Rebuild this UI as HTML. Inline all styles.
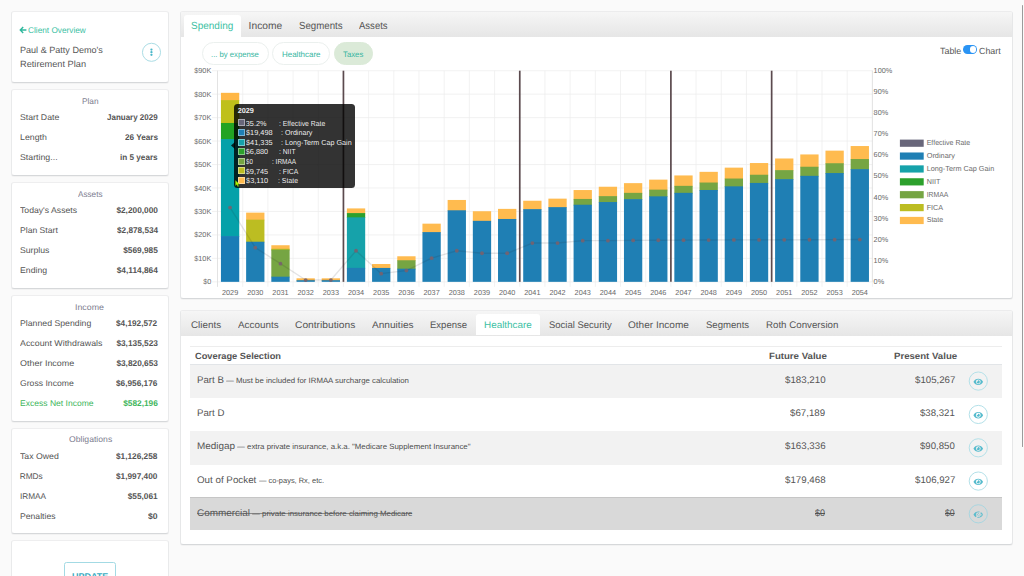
<!DOCTYPE html>
<html lang="en">
<head>
<meta charset="utf-8">
<title>Retirement Plan</title>
<style>
*{box-sizing:border-box;margin:0;padding:0}
html,body{width:1024px;height:576px;overflow:hidden;background:#fafafa;font-family:"Liberation Sans",sans-serif;color:#555;text-rendering:geometricPrecision}
body{position:relative}
#app{position:absolute;left:0;top:0;width:1024px;height:620px;}
.abs{position:absolute;display:block}
.t{position:absolute;display:block;white-space:nowrap;line-height:12px;transform-origin:0 50%;font-weight:normal;color:#555;text-decoration:none}
.t.b{font-weight:bold}
.card{position:absolute;left:11px;width:158px;background:#fff;border:1px solid #e9eaeb;border-top-color:#eeeeef;border-bottom-color:#d6d8da;border-radius:3px;box-shadow:0 1px 1px rgba(0,0,0,.035)}
.panel{position:absolute;left:180px;width:833px;background:#fff;border:1px solid #e6e7e8;border-top-color:#ececed;border-bottom-color:#d6d8da;border-radius:3px;box-shadow:0 1px 1px rgba(0,0,0,.035)}
.tabbar{position:absolute;left:0;right:0;top:0;height:25px;background:linear-gradient(#f6f6f6,#e6e6e6);border-radius:2px 2px 0 0}
.p2 .tabbar{height:24.5px}
.tabon{height:22px;background:#fff;border-radius:3px 3px 0 0}
.pill{height:22.7px;border:1px solid #ebf0ee;border-radius:11.5px;background:#fff}
.pill.sel{background:#dbead8;border-color:#dbead8}
.tog{width:14.5px;height:8.8px;border-radius:4.4px;background:#2a94f4}
.tog i{position:absolute;right:1.1px;top:1.2px;width:6.4px;height:6.4px;border-radius:50%;background:#fff}
.upd{width:51.5px;height:30px;border:1px solid #a3dae4;border-radius:2.5px;background:#fff}
.chart text{font-family:"Liberation Sans",sans-serif;font-size:7.3px;fill:#6a6a6a}
.tt{position:absolute;width:120.7px;height:84.3px;background:rgba(0,0,0,.8);border-radius:3.5px}
.tt .t{line-height:9px;font-size:7.3px;color:rgba(255,255,255,.93);white-space:pre}
.tt b.t{font-weight:bold}
.sw{width:7.1px;height:7.1px;border:1px solid rgba(255,255,255,.42)}
.thead{border-top:1px solid #ededed;border-bottom:1px solid #e3e6e8}
.trow.off{border-top:1px solid #c6c6c6}
.trow.first{border-top:1px solid #e2e5e8}
.sb{left:1021.8px;top:5px;width:1.3px;height:442px;background:#9b9b9b;border-radius:1px}
</style>
</head>
<body>
<div id="app">
<aside>
<section class="card" style="top:11px;height:72px">
<svg class="abs" width="8" height="8" viewBox="0 0 8 8" style="left:7px;top:14px"><path d="M3.7 .5 .3 4 3.7 7.5 4.7 6.5 3 4.8H7.4V3.2H3L4.7 1.5Z" fill="#2fb89d"/></svg>
<a class="t" style="left:16.46px;top:12.4px;font-size:8.32px;transform:scaleX(0.993);color:#3dbfa4">Client Overview</a>
<span class="t l" style="left:7.7px;top:30.5px;font-size:8.96px;transform:scaleX(1.012);line-height:14px;color:#555">Paul &amp; Patty Demo's</span>
<span class="t l" style="left:7.7px;top:44.5px;font-size:8.96px;transform:scaleX(1.029);line-height:14px;color:#555">Retirement Plan</span>
<svg class="abs dots" width="23" height="23" viewBox="0 0 23 23" style="left:128px;top:29px"><g transform="translate(0.5 0.3)"><circle cx="11" cy="11" r="9.05" fill="none" stroke="#abdde5" stroke-width="1"/><g fill="#4ab7c9"><circle cx="10.95" cy="8.25" r="1.15"/><circle cx="10.95" cy="10.9" r="1.15"/><circle cx="10.95" cy="13.55" r="1.15"/></g></g></svg>
</section>
<section class="card" style="top:89px;height:87px">
<h3 class="t h" style="left:69.95px;top:5.2px;font-size:8.32px;color:#7e7e90">Plan</h3>
<span class="t l" style="left:7.7px;top:21.22px;font-size:8.32px;transform:scaleX(1.049)">Start Date</span>
<span class="t b v" style="left:95.2px;top:21.22px;font-size:8.32px;transform:scaleX(0.960);color:#545454">January 2029</span>
<span class="t l" style="left:7.7px;top:41.22px;font-size:8.32px;transform:scaleX(1.055)">Length</span>
<span class="t b v" style="left:112.7px;top:41.22px;font-size:8.32px;transform:scaleX(0.984);color:#545454">26 Years</span>
<span class="t l" style="left:7.7px;top:61.22px;font-size:8.32px;transform:scaleX(1.056)">Starting...</span>
<span class="t b v" style="left:108.45px;top:61.22px;font-size:8.32px;transform:scaleX(0.981);color:#545454">in 5 years</span>
</section>
<section class="card" style="top:182px;height:107px">
<h3 class="t h" style="left:65.7px;top:4.95px;font-size:8.32px;transform:scaleX(0.981);color:#7e7e90">Assets</h3>
<span class="t l" style="left:7.7px;top:20.97px;font-size:8.32px;transform:scaleX(1.042)">Today's Assets</span>
<span class="t b v" style="left:104.38px;top:20.97px;font-size:8.32px;color:#545454">$2,200,000</span>
<span class="t l" style="left:7.7px;top:41.22px;font-size:8.32px;transform:scaleX(1.035)">Plan Start</span>
<span class="t b v" style="left:104.65px;top:41.22px;font-size:8.32px;transform:scaleX(0.988);color:#545454">$2,878,534</span>
<span class="t l" style="left:7.7px;top:61.22px;font-size:8.32px;transform:scaleX(1.045)">Surplus</span>
<span class="t b v" style="left:111.2px;top:61.22px;font-size:8.32px;color:#545454">$569,985</span>
<span class="t l" style="left:7.7px;top:80.97px;font-size:8.32px;transform:scaleX(1.046)">Ending</span>
<span class="t b v" style="left:104.72px;top:80.97px;font-size:8.32px;color:#545454">$4,114,864</span>
</section>
<section class="card" style="top:295px;height:127px">
<h3 class="t h" style="left:63.3px;top:4.7px;font-size:8.32px;transform:scaleX(1.060);color:#7e7e90">Income</h3>
<span class="t l" style="left:7.7px;top:20.82px;font-size:8.32px;transform:scaleX(1.049)">Planned Spending</span>
<span class="t b v" style="left:104.33px;top:20.82px;font-size:8.32px;transform:scaleX(0.990);color:#545454">$4,192,572</span>
<span class="t l" style="left:7.7px;top:40.92px;font-size:8.32px;transform:scaleX(1.062)">Account Withdrawals</span>
<span class="t b v" style="left:104.38px;top:40.92px;font-size:8.32px;color:#545454">$3,135,523</span>
<span class="t l" style="left:7.7px;top:60.97px;font-size:8.32px;transform:scaleX(1.078)">Other Income</span>
<span class="t b v" style="left:104.38px;top:60.97px;font-size:8.32px;color:#545454">$3,820,653</span>
<span class="t l" style="left:7.7px;top:80.97px;font-size:8.32px;transform:scaleX(1.039)">Gross Income</span>
<span class="t b v" style="left:104.35px;top:80.97px;font-size:8.32px;transform:scaleX(0.995);color:#545454">$6,956,176</span>
<span class="t l" style="left:7.7px;top:100.97px;font-size:8.32px;transform:scaleX(1.027);color:#41b65c">Excess Net Income</span>
<span class="t b v" style="left:111.2px;top:100.97px;font-size:8.32px;color:#41b65c">$582,196</span>
</section>
<section class="card" style="top:428px;height:106px">
<h3 class="t h" style="left:56.54px;top:4.45px;font-size:8.32px;transform:scaleX(1.039);color:#7e7e90">Obligations</h3>
<span class="t l" style="left:7.7px;top:20.97px;font-size:8.32px;transform:scaleX(1.050)">Tax Owed</span>
<span class="t b v" style="left:104.36px;top:20.97px;font-size:8.32px;transform:scaleX(0.995);color:#545454">$1,126,258</span>
<span class="t l" style="left:7.7px;top:40.97px;font-size:8.32px">RMDs</span>
<span class="t b v" style="left:104.35px;top:40.97px;font-size:8.32px;transform:scaleX(0.995);color:#545454">$1,997,400</span>
<span class="t l" style="left:7.7px;top:60.97px;font-size:8.32px;transform:scaleX(0.991)">IRMAA</span>
<span class="t b v" style="left:115.7px;top:60.97px;font-size:8.32px;color:#545454">$55,061</span>
<span class="t l" style="left:7.7px;top:80.82px;font-size:8.32px;transform:scaleX(1.038)">Penalties</span>
<span class="t b v" style="left:136.2px;top:80.82px;font-size:8.32px;transform:scaleX(1.037);color:#545454">$0</span>
</section>
<section class="card" style="top:540px;height:60px">
<button class="abs upd" style="left:52.4px;top:21.2px"></button>
<span class="t b nocal" style="left:60.2px;top:28.72px;font-size:8.32px;transform:scaleX(1.082);color:#38abc1">UPDATE</span>
</section>
</aside>
<main>
<section class="panel" style="top:11px;height:288px">
<div class="tabbar"></div>
<div class="abs tabon" style="left:2.75px;top:2.6px;width:57.1px;height:22.4px"></div>
<a class="t" style="left:10.45px;top:9.45px;font-size:10.24px;transform:scaleX(0.977);color:#3dbfa4">Spending</a>
<a class="t" style="left:67.6px;top:9.45px;font-size:10.24px">Income</a>
<a class="t" style="left:117.95px;top:9.45px;font-size:10.24px;transform:scaleX(0.946)">Segments</a>
<a class="t" style="left:178.2px;top:9.45px;font-size:10.24px;transform:scaleX(0.931)">Assets</a>
<div class="abs pill" style="left:21px;top:30px;width:67px"></div>
<span class="t" style="left:30.34px;top:37.26px;font-size:7.9px;transform:scaleX(0.975);color:#36b6a1">... by expense</span>
<div class="abs pill" style="left:91.25px;top:30px;width:57.75px"></div>
<span class="t" style="left:101.2px;top:37.26px;font-size:7.9px;transform:scaleX(1.010);color:#36b6a1">Healthcare</span>
<div class="abs pill sel" style="left:153px;top:30px;width:39.25px"></div>
<span class="t" style="left:162.45px;top:37.26px;font-size:7.9px;transform:scaleX(0.986);color:#36b6a1">Taxes</span>
<span class="t" style="left:758.95px;top:32.6px;font-size:8.96px;transform:scaleX(0.992)">Table</span>
<div class="abs tog" style="left:781.75px;top:33.2px"><i></i></div>
<span class="t" style="left:797.9px;top:32.6px;font-size:8.96px;transform:scaleX(0.988)">Chart</span>
<svg class="abs chart" width="831" height="286" viewBox="181 12 831 286" style="left:0;top:0">
<line x1="212" y1="70.7" x2="872.4" y2="70.7" stroke="#ededed" stroke-width="0.7"/>
<line x1="212" y1="94.16" x2="872.4" y2="94.16" stroke="#ededed" stroke-width="0.7"/>
<line x1="212" y1="117.62" x2="872.4" y2="117.62" stroke="#ededed" stroke-width="0.7"/>
<line x1="212" y1="141.08" x2="872.4" y2="141.08" stroke="#ededed" stroke-width="0.7"/>
<line x1="212" y1="164.54" x2="872.4" y2="164.54" stroke="#ededed" stroke-width="0.7"/>
<line x1="212" y1="188" x2="872.4" y2="188" stroke="#ededed" stroke-width="0.7"/>
<line x1="212" y1="211.46" x2="872.4" y2="211.46" stroke="#ededed" stroke-width="0.7"/>
<line x1="212" y1="234.92" x2="872.4" y2="234.92" stroke="#ededed" stroke-width="0.7"/>
<line x1="212" y1="258.38" x2="872.4" y2="258.38" stroke="#ededed" stroke-width="0.7"/>
<line x1="212" y1="281.84" x2="872.4" y2="281.84" stroke="#ededed" stroke-width="0.7"/>
<line x1="217.5" y1="70.7" x2="217.5" y2="286.84" stroke="#ededed" stroke-width="0.7"/>
<line x1="242.69" y1="70.7" x2="242.69" y2="286.84" stroke="#ededed" stroke-width="0.7"/>
<line x1="267.88" y1="70.7" x2="267.88" y2="286.84" stroke="#ededed" stroke-width="0.7"/>
<line x1="293.07" y1="70.7" x2="293.07" y2="286.84" stroke="#ededed" stroke-width="0.7"/>
<line x1="318.25" y1="70.7" x2="318.25" y2="286.84" stroke="#ededed" stroke-width="0.7"/>
<line x1="343.44" y1="70.7" x2="343.44" y2="286.84" stroke="#ededed" stroke-width="0.7"/>
<line x1="368.63" y1="70.7" x2="368.63" y2="286.84" stroke="#ededed" stroke-width="0.7"/>
<line x1="393.82" y1="70.7" x2="393.82" y2="286.84" stroke="#ededed" stroke-width="0.7"/>
<line x1="419.01" y1="70.7" x2="419.01" y2="286.84" stroke="#ededed" stroke-width="0.7"/>
<line x1="444.2" y1="70.7" x2="444.2" y2="286.84" stroke="#ededed" stroke-width="0.7"/>
<line x1="469.38" y1="70.7" x2="469.38" y2="286.84" stroke="#ededed" stroke-width="0.7"/>
<line x1="494.57" y1="70.7" x2="494.57" y2="286.84" stroke="#ededed" stroke-width="0.7"/>
<line x1="519.76" y1="70.7" x2="519.76" y2="286.84" stroke="#ededed" stroke-width="0.7"/>
<line x1="544.95" y1="70.7" x2="544.95" y2="286.84" stroke="#ededed" stroke-width="0.7"/>
<line x1="570.14" y1="70.7" x2="570.14" y2="286.84" stroke="#ededed" stroke-width="0.7"/>
<line x1="595.33" y1="70.7" x2="595.33" y2="286.84" stroke="#ededed" stroke-width="0.7"/>
<line x1="620.52" y1="70.7" x2="620.52" y2="286.84" stroke="#ededed" stroke-width="0.7"/>
<line x1="645.7" y1="70.7" x2="645.7" y2="286.84" stroke="#ededed" stroke-width="0.7"/>
<line x1="670.89" y1="70.7" x2="670.89" y2="286.84" stroke="#ededed" stroke-width="0.7"/>
<line x1="696.08" y1="70.7" x2="696.08" y2="286.84" stroke="#ededed" stroke-width="0.7"/>
<line x1="721.27" y1="70.7" x2="721.27" y2="286.84" stroke="#ededed" stroke-width="0.7"/>
<line x1="746.46" y1="70.7" x2="746.46" y2="286.84" stroke="#ededed" stroke-width="0.7"/>
<line x1="771.65" y1="70.7" x2="771.65" y2="286.84" stroke="#ededed" stroke-width="0.7"/>
<line x1="796.83" y1="70.7" x2="796.83" y2="286.84" stroke="#ededed" stroke-width="0.7"/>
<line x1="822.02" y1="70.7" x2="822.02" y2="286.84" stroke="#ededed" stroke-width="0.7"/>
<line x1="847.21" y1="70.7" x2="847.21" y2="286.84" stroke="#ededed" stroke-width="0.7"/>
<line x1="872.4" y1="70.7" x2="872.4" y2="286.84" stroke="#ededed" stroke-width="0.7"/>
<line x1="217.5" y1="70.7" x2="217.5" y2="286.84" stroke="#dcdcdc" stroke-width="0.7"/>
<line x1="872.4" y1="70.7" x2="872.4" y2="281.84" stroke="#dcdcdc" stroke-width="0.7"/>
<rect x="220.94" y="92.83" width="18.3" height="8" fill="#ffb746"/>
<rect x="220.94" y="100.12" width="18.3" height="23.56" fill="#bfc01a"/>
<rect x="220.94" y="122.99" width="18.3" height="16.84" fill="#22a322"/>
<rect x="220.94" y="139.13" width="18.3" height="97.67" fill="#05a1a9"/>
<rect x="220.94" y="236.1" width="18.3" height="45.74" fill="#1a7cb6"/>
<rect x="246.13" y="212.63" width="18.3" height="7.74" fill="#ffbb4f"/>
<rect x="246.13" y="219.67" width="18.3" height="22.75" fill="#bcbd22"/>
<rect x="246.13" y="241.72" width="18.3" height="40.12" fill="#1f7fb4"/>
<rect x="271.32" y="245.24" width="18.3" height="4.22" fill="#ffbb4f"/>
<rect x="271.32" y="248.76" width="18.3" height="1.64" fill="#bcbd22"/>
<rect x="271.32" y="249.7" width="18.3" height="27.68" fill="#76a543"/>
<rect x="271.32" y="276.68" width="18.3" height="5.16" fill="#1f7fb4"/>
<rect x="296.51" y="278.32" width="18.3" height="2.58" fill="#ffbb4f"/>
<rect x="296.51" y="280.2" width="18.3" height="1.64" fill="#1f7fb4"/>
<rect x="321.7" y="278.32" width="18.3" height="2.58" fill="#ffbb4f"/>
<rect x="321.7" y="280.2" width="18.3" height="1.64" fill="#1f7fb4"/>
<rect x="346.89" y="208.41" width="18.3" height="5.39" fill="#ffbb4f"/>
<rect x="346.89" y="213.1" width="18.3" height="4.92" fill="#2ca02c"/>
<rect x="346.89" y="217.33" width="18.3" height="51.23" fill="#16a2aa"/>
<rect x="346.89" y="267.86" width="18.3" height="13.98" fill="#1f7fb4"/>
<rect x="372.08" y="264.01" width="18.3" height="4.62" fill="#ffbb4f"/>
<rect x="372.08" y="267.93" width="18.3" height="13.91" fill="#1f7fb4"/>
<rect x="397.26" y="256.27" width="18.3" height="4.69" fill="#ffbb4f"/>
<rect x="397.26" y="260.26" width="18.3" height="9.15" fill="#76a543"/>
<rect x="397.26" y="268.7" width="18.3" height="13.14" fill="#1f7fb4"/>
<rect x="422.45" y="223.66" width="18.3" height="9.15" fill="#ffbb4f"/>
<rect x="422.45" y="232.1" width="18.3" height="49.74" fill="#1f7fb4"/>
<rect x="447.64" y="199.96" width="18.3" height="11.02" fill="#ffbb4f"/>
<rect x="447.64" y="210.29" width="18.3" height="71.55" fill="#1f7fb4"/>
<rect x="472.83" y="211.23" width="18.3" height="10.32" fill="#ffbb4f"/>
<rect x="472.83" y="220.84" width="18.3" height="61" fill="#1f7fb4"/>
<rect x="498.02" y="208.88" width="18.3" height="10.79" fill="#ffbb4f"/>
<rect x="498.02" y="218.97" width="18.3" height="62.87" fill="#1f7fb4"/>
<rect x="523.21" y="200.74" width="18.3" height="9.1" fill="#ffbb4f"/>
<rect x="523.21" y="209.14" width="18.3" height="72.7" fill="#1f7fb4"/>
<rect x="548.39" y="198.64" width="18.3" height="9.2" fill="#ffbb4f"/>
<rect x="548.39" y="207.14" width="18.3" height="74.7" fill="#1f7fb4"/>
<rect x="573.58" y="190.04" width="18.3" height="9.6" fill="#ffbb4f"/>
<rect x="573.58" y="198.94" width="18.3" height="6.5" fill="#76a543"/>
<rect x="573.58" y="204.74" width="18.3" height="77.1" fill="#1f7fb4"/>
<rect x="598.77" y="186.74" width="18.3" height="10.1" fill="#ffbb4f"/>
<rect x="598.77" y="196.14" width="18.3" height="6.6" fill="#76a543"/>
<rect x="598.77" y="202.04" width="18.3" height="79.8" fill="#1f7fb4"/>
<rect x="623.96" y="183.14" width="18.3" height="10.4" fill="#ffbb4f"/>
<rect x="623.96" y="192.84" width="18.3" height="7" fill="#76a543"/>
<rect x="623.96" y="199.14" width="18.3" height="82.7" fill="#1f7fb4"/>
<rect x="649.15" y="179.64" width="18.3" height="10.7" fill="#ffbb4f"/>
<rect x="649.15" y="189.64" width="18.3" height="7.4" fill="#76a543"/>
<rect x="649.15" y="196.34" width="18.3" height="85.5" fill="#1f7fb4"/>
<rect x="674.34" y="175.44" width="18.3" height="11.1" fill="#ffbb4f"/>
<rect x="674.34" y="185.84" width="18.3" height="7.7" fill="#76a543"/>
<rect x="674.34" y="192.84" width="18.3" height="89" fill="#1f7fb4"/>
<rect x="699.52" y="171.84" width="18.3" height="11.4" fill="#ffbb4f"/>
<rect x="699.52" y="182.54" width="18.3" height="8.15" fill="#76a543"/>
<rect x="699.52" y="189.99" width="18.3" height="91.85" fill="#1f7fb4"/>
<rect x="724.71" y="167.64" width="18.3" height="11.6" fill="#ffbb4f"/>
<rect x="724.71" y="178.54" width="18.3" height="8.5" fill="#76a543"/>
<rect x="724.71" y="186.34" width="18.3" height="95.5" fill="#1f7fb4"/>
<rect x="749.9" y="163.04" width="18.3" height="12.4" fill="#ffbb4f"/>
<rect x="749.9" y="174.74" width="18.3" height="8.9" fill="#76a543"/>
<rect x="749.9" y="182.94" width="18.3" height="98.9" fill="#1f7fb4"/>
<rect x="775.09" y="158.49" width="18.3" height="12.35" fill="#ffbb4f"/>
<rect x="775.09" y="170.14" width="18.3" height="9.7" fill="#76a543"/>
<rect x="775.09" y="179.14" width="18.3" height="102.7" fill="#1f7fb4"/>
<rect x="800.28" y="154.44" width="18.3" height="13" fill="#ffbb4f"/>
<rect x="800.28" y="166.74" width="18.3" height="9.8" fill="#76a543"/>
<rect x="800.28" y="175.84" width="18.3" height="106" fill="#1f7fb4"/>
<rect x="825.47" y="150.64" width="18.3" height="13.3" fill="#ffbb4f"/>
<rect x="825.47" y="163.24" width="18.3" height="10.5" fill="#76a543"/>
<rect x="825.47" y="173.04" width="18.3" height="108.8" fill="#1f7fb4"/>
<rect x="850.66" y="146.04" width="18.3" height="13.7" fill="#ffbb4f"/>
<rect x="850.66" y="159.04" width="18.3" height="10.8" fill="#76a543"/>
<rect x="850.66" y="169.14" width="18.3" height="112.7" fill="#1f7fb4"/>
<line x1="343.44" y1="70.7" x2="343.44" y2="281.84" stroke="#5b4a4e" stroke-width="1.7"/>
<line x1="519.76" y1="70.7" x2="519.76" y2="281.84" stroke="#5b4a4e" stroke-width="1.7"/>
<line x1="670.89" y1="70.7" x2="670.89" y2="281.84" stroke="#5b4a4e" stroke-width="1.7"/>
<line x1="771.65" y1="70.7" x2="771.65" y2="281.84" stroke="#5b4a4e" stroke-width="1.7"/>
<polyline points="230.09,207.54 255.28,247.64 280.47,263.64 305.66,280.04 330.85,280.04 356.04,250.74 381.23,273.64 406.41,270.54 431.6,258.14 456.79,250.74 481.98,253.24 507.17,253.24 532.36,243.04 557.54,243.04 582.73,240.64 607.92,240.64 633.11,240.44 658.3,240.24 683.49,240.14 708.67,240.04 733.86,239.94 759.05,239.94 784.24,239.84 809.43,239.74 834.62,239.64 859.81,239.54" fill="none" stroke="rgba(30,30,40,0.12)" stroke-width="1.35" stroke-linejoin="round"/>
<circle cx="230.09" cy="207.54" r="1.9" fill="rgba(120,98,110,0.9)"/>
<circle cx="255.28" cy="247.64" r="1.9" fill="rgba(120,98,110,0.9)"/>
<circle cx="280.47" cy="263.64" r="1.9" fill="rgba(120,98,110,0.9)"/>
<circle cx="305.66" cy="280.04" r="1.9" fill="rgba(120,98,110,0.9)"/>
<circle cx="330.85" cy="280.04" r="1.9" fill="rgba(120,98,110,0.9)"/>
<circle cx="356.04" cy="250.74" r="1.9" fill="rgba(120,98,110,0.9)"/>
<circle cx="381.23" cy="273.64" r="1.9" fill="rgba(120,98,110,0.9)"/>
<circle cx="406.41" cy="270.54" r="1.9" fill="rgba(120,98,110,0.9)"/>
<circle cx="431.6" cy="258.14" r="1.9" fill="rgba(120,98,110,0.9)"/>
<circle cx="456.79" cy="250.74" r="1.9" fill="rgba(120,98,110,0.9)"/>
<circle cx="481.98" cy="253.24" r="1.9" fill="rgba(120,98,110,0.9)"/>
<circle cx="507.17" cy="253.24" r="1.9" fill="rgba(120,98,110,0.9)"/>
<circle cx="532.36" cy="243.04" r="1.9" fill="rgba(120,98,110,0.9)"/>
<circle cx="557.54" cy="243.04" r="1.9" fill="rgba(120,98,110,0.9)"/>
<circle cx="582.73" cy="240.64" r="1.9" fill="rgba(120,98,110,0.9)"/>
<circle cx="607.92" cy="240.64" r="1.9" fill="rgba(120,98,110,0.9)"/>
<circle cx="633.11" cy="240.44" r="1.9" fill="rgba(120,98,110,0.9)"/>
<circle cx="658.3" cy="240.24" r="1.9" fill="rgba(120,98,110,0.9)"/>
<circle cx="683.49" cy="240.14" r="1.9" fill="rgba(120,98,110,0.9)"/>
<circle cx="708.67" cy="240.04" r="1.9" fill="rgba(120,98,110,0.9)"/>
<circle cx="733.86" cy="239.94" r="1.9" fill="rgba(120,98,110,0.9)"/>
<circle cx="759.05" cy="239.94" r="1.9" fill="rgba(120,98,110,0.9)"/>
<circle cx="784.24" cy="239.84" r="1.9" fill="rgba(120,98,110,0.9)"/>
<circle cx="809.43" cy="239.74" r="1.9" fill="rgba(120,98,110,0.9)"/>
<circle cx="834.62" cy="239.64" r="1.9" fill="rgba(120,98,110,0.9)"/>
<circle cx="859.81" cy="239.54" r="1.9" fill="rgba(120,98,110,0.9)"/>
<text x="211.3" y="73.25" text-anchor="end">$90K</text>
<text x="211.3" y="96.71" text-anchor="end">$80K</text>
<text x="211.3" y="120.17" text-anchor="end">$70K</text>
<text x="211.3" y="143.63" text-anchor="end">$60K</text>
<text x="211.3" y="167.09" text-anchor="end">$50K</text>
<text x="211.3" y="190.55" text-anchor="end">$40K</text>
<text x="211.3" y="214.01" text-anchor="end">$30K</text>
<text x="211.3" y="237.47" text-anchor="end">$20K</text>
<text x="211.3" y="260.93" text-anchor="end">$10K</text>
<text x="211.3" y="284.39" text-anchor="end">$0</text>
<text x="873.6" y="72.75">100%</text>
<text x="873.6" y="93.88">90%</text>
<text x="873.6" y="115.01">80%</text>
<text x="873.6" y="136.14">70%</text>
<text x="873.6" y="157.27">60%</text>
<text x="873.6" y="178.4">50%</text>
<text x="873.6" y="199.53">40%</text>
<text x="873.6" y="220.66">30%</text>
<text x="873.6" y="241.79">20%</text>
<text x="873.6" y="262.92">10%</text>
<text x="873.6" y="284.05">0%</text>
<text x="230.09" y="294.8" text-anchor="middle">2029</text>
<text x="255.28" y="294.8" text-anchor="middle">2030</text>
<text x="280.47" y="294.8" text-anchor="middle">2031</text>
<text x="305.66" y="294.8" text-anchor="middle">2032</text>
<text x="330.85" y="294.8" text-anchor="middle">2033</text>
<text x="356.04" y="294.8" text-anchor="middle">2034</text>
<text x="381.23" y="294.8" text-anchor="middle">2035</text>
<text x="406.41" y="294.8" text-anchor="middle">2036</text>
<text x="431.6" y="294.8" text-anchor="middle">2037</text>
<text x="456.79" y="294.8" text-anchor="middle">2038</text>
<text x="481.98" y="294.8" text-anchor="middle">2039</text>
<text x="507.17" y="294.8" text-anchor="middle">2040</text>
<text x="532.36" y="294.8" text-anchor="middle">2041</text>
<text x="557.54" y="294.8" text-anchor="middle">2042</text>
<text x="582.73" y="294.8" text-anchor="middle">2043</text>
<text x="607.92" y="294.8" text-anchor="middle">2044</text>
<text x="633.11" y="294.8" text-anchor="middle">2045</text>
<text x="658.3" y="294.8" text-anchor="middle">2046</text>
<text x="683.49" y="294.8" text-anchor="middle">2047</text>
<text x="708.67" y="294.8" text-anchor="middle">2048</text>
<text x="733.86" y="294.8" text-anchor="middle">2049</text>
<text x="759.05" y="294.8" text-anchor="middle">2050</text>
<text x="784.24" y="294.8" text-anchor="middle">2051</text>
<text x="809.43" y="294.8" text-anchor="middle">2052</text>
<text x="834.62" y="294.8" text-anchor="middle">2053</text>
<text x="859.81" y="294.8" text-anchor="middle">2054</text>
<rect x="899.9" y="139.6" width="23.8" height="7.2" fill="#68667a"/>
<text x="926.7" y="145.2" textLength="43.5" lengthAdjust="spacingAndGlyphs">Effective Rate</text>
<rect x="899.9" y="152.48" width="23.8" height="7.2" fill="#1f7fb4"/>
<text x="926.7" y="158.08" textLength="28.2" lengthAdjust="spacingAndGlyphs">Ordinary</text>
<rect x="899.9" y="165.36" width="23.8" height="7.2" fill="#16a2aa"/>
<text x="926.7" y="170.96" textLength="67.5" lengthAdjust="spacingAndGlyphs">Long-Term Cap Gain</text>
<rect x="899.9" y="178.24" width="23.8" height="7.2" fill="#2ca02c"/>
<text x="926.7" y="183.84" textLength="13.6" lengthAdjust="spacingAndGlyphs">NIIT</text>
<rect x="899.9" y="191.12" width="23.8" height="7.2" fill="#76a543"/>
<text x="926.7" y="196.72" textLength="21.5" lengthAdjust="spacingAndGlyphs">IRMAA</text>
<rect x="899.9" y="204" width="23.8" height="7.2" fill="#bcbd22"/>
<text x="926.7" y="209.6" textLength="16.4" lengthAdjust="spacingAndGlyphs">FICA</text>
<rect x="899.9" y="216.88" width="23.8" height="7.2" fill="#ffbb4f"/>
<text x="926.7" y="222.48" textLength="16.5" lengthAdjust="spacingAndGlyphs">State</text>
</svg>
</section>
<div class="tt" style="left:234.4px;top:103.7px">
<svg class="abs" width="4" height="7" viewBox="0 0 4 7" style="left:-3.6px;top:38.6px"><path d="M4 0 0 3.5 4 7Z" fill="rgba(0,0,0,.8)"/></svg>
<b class="t" style="left:3.3px;top:2.4px">2029</b>
<i class="abs sw" style="left:3.5px;top:15.65px;background:#68667a"></i>
<span class="t tv" style="left:11.4px;top:14.82px;font-size:7.3px;line-height:9px">35.2%</span>
<span class="t tl" style="left:44.4px;top:14.82px;font-size:7.3px;transform:scaleX(0.936);line-height:9px">: Effective Rate</span>
<i class="abs sw" style="left:3.5px;top:25.25px;background:#1f7fb4"></i>
<span class="t tv" style="left:11.4px;top:24.42px;font-size:7.3px;transform:scaleX(1.008);line-height:9px">$19,498</span>
<span class="t tl" style="left:46.65px;top:24.42px;font-size:7.3px;transform:scaleX(0.978);line-height:9px">: Ordinary</span>
<i class="abs sw" style="left:3.5px;top:34.85px;background:#16a2aa"></i>
<span class="t tv" style="left:11.4px;top:34.02px;font-size:7.3px;transform:scaleX(1.008);line-height:9px">$41,335</span>
<span class="t tl" style="left:46.65px;top:34.02px;font-size:7.3px;transform:scaleX(0.985);line-height:9px">: Long-Term Cap Gain</span>
<i class="abs sw" style="left:3.5px;top:44.45px;background:#2ca02c"></i>
<span class="t tv" style="left:11.4px;top:43.62px;font-size:7.3px;line-height:9px">$6,880</span>
<span class="t tl" style="left:44.4px;top:43.62px;font-size:7.3px;transform:scaleX(0.925);line-height:9px">: NIIT</span>
<i class="abs sw" style="left:3.5px;top:54.05px;background:#76a543"></i>
<span class="t tv" style="left:11.4px;top:53.22px;font-size:7.3px;transform:scaleX(0.837);line-height:9px">$0</span>
<span class="t tl" style="left:37.3px;top:53.22px;font-size:7.3px;transform:scaleX(0.888);line-height:9px">: IRMAA</span>
<i class="abs sw" style="left:3.5px;top:63.65px;background:#bcbd22"></i>
<span class="t tv" style="left:11.4px;top:62.82px;font-size:7.3px;line-height:9px">$9,745</span>
<span class="t tl" style="left:44.15px;top:62.82px;font-size:7.3px;transform:scaleX(0.934);line-height:9px">: FICA</span>
<i class="abs sw" style="left:3.5px;top:73.25px;background:#ffbb4f"></i>
<span class="t tv" style="left:11.4px;top:72.42px;font-size:7.3px;transform:scaleX(1.021);line-height:9px">$3,110</span>
<span class="t tl" style="left:43.7px;top:72.42px;font-size:7.3px;transform:scaleX(0.948);line-height:9px">: State</span>
</div>
<svg class="abs" width="6" height="8" viewBox="0 0 6 8" style="left:235.4px;top:179.9px"><path d="M.5 .4V5.6L1.8 4.5 2.8 6.6 3.7 6.2 2.8 4.2H4.5Z" fill="#aef500" stroke="#7fb800" stroke-width=".3"/></svg>
<section class="panel p2" style="top:310px;height:235px">
<div class="tabbar"></div>
<div class="abs tabon" style="left:294.75px;top:3.1px;width:64.1px;height:21.3px"></div>
<a class="t" style="left:10.45px;top:8.91px;font-size:9.6px;transform:scaleX(1.026)">Clients</a>
<a class="t" style="left:56.95px;top:8.91px;font-size:9.6px;transform:scaleX(1.028)">Accounts</a>
<a class="t" style="left:114.2px;top:8.91px;font-size:9.6px;transform:scaleX(1.067)">Contributions</a>
<a class="t" style="left:190.95px;top:8.91px;font-size:9.6px;transform:scaleX(1.053)">Annuities</a>
<a class="t" style="left:249.2px;top:8.91px;font-size:9.6px;transform:scaleX(0.993)">Expense</a>
<a class="t" style="left:303.2px;top:8.91px;font-size:9.6px;transform:scaleX(1.031);color:#3dbfa4">Healthcare</a>
<a class="t" style="left:367.95px;top:8.91px;font-size:9.6px;transform:scaleX(0.990)">Social Security</a>
<a class="t" style="left:447.45px;top:8.91px;font-size:9.6px;transform:scaleX(1.047)">Other Income</a>
<a class="t" style="left:524.95px;top:8.91px;font-size:9.6px">Segments</a>
<a class="t" style="left:585.45px;top:8.91px;font-size:9.6px;transform:scaleX(1.013)">Roth Conversion</a>
<div class="abs thead" style="left:8.75px;top:35px;width:812.5px;height:19px"></div>
<span class="t b" style="left:13.7px;top:38.9px;font-size:8.96px;transform:scaleX(1.035);color:#545454">Coverage Selection</span>
<span class="t b" style="left:588.45px;top:38.9px;font-size:8.96px;transform:scaleX(1.076);color:#545454">Future Value</span>
<span class="t b" style="left:713.36px;top:38.9px;font-size:8.96px;transform:scaleX(1.075);color:#545454">Present Value</span>
<div class="abs trow first" style="left:8.75px;top:53px;width:812.5px;height:33.75px;background:#f2f2f2"></div>
<span class="t" style="left:15.9px;top:63.17px;font-size:9.6px;transform:scaleX(1.008);line-height:13px">Part B</span>
<small class="t sm" style="left:45.05px;top:64.34px;font-size:7.68px;transform:scaleX(1.019);color:#4d4d4d">— Must be included for IRMAA surcharge calculation</small>
<span class="t" style="left:603.7px;top:63.91px;font-size:9.6px;transform:scaleX(1.014)">$183,210</span>
<span class="t" style="left:733.7px;top:63.91px;font-size:9.6px;transform:scaleX(1.008)">$105,267</span>
<svg class="abs eye" width="23" height="23" viewBox="0 0 23 23" style="left:786px;top:59px"><g transform="translate(0.3 0.07)"><circle cx="11" cy="11" r="9.1" fill="none" stroke="#b4e1e9" stroke-width="1"/><g transform="translate(6.2 7.55) scale(0.0166)" fill-rule="evenodd"><path d="M572.52 241.4C518.29 135.59 410.93 64 288 64S57.68 135.64 3.48 241.41a32.35 32.35 0 0 0 0 29.19C57.71 376.41 165.07 448 288 448s230.32-71.64 284.52-177.41a32.35 32.35 0 0 0 0-29.19zM288 400a144 144 0 1 1 144-144 143.93 143.93 0 0 1-144 144zm0-240a95.31 95.31 0 0 0-25.31 3.79 47.85 47.85 0 0 1-66.9 66.9A95.78 95.78 0 1 0 288 160z" fill="#55bbcd"/></g></g></svg>
<div class="abs trow" style="left:8.75px;top:86.75px;width:812.5px;height:33px;background:#fff"></div>
<span class="t" style="left:15.9px;top:96.42px;font-size:9.6px;transform:scaleX(1.007);line-height:13px">Part D</span>
<span class="t" style="left:609.2px;top:97.16px;font-size:9.6px;transform:scaleX(1.011)">$67,189</span>
<span class="t" style="left:739.2px;top:97.16px;font-size:9.6px;transform:scaleX(1.004)">$38,321</span>
<svg class="abs eye" width="23" height="23" viewBox="0 0 23 23" style="left:786px;top:92px"><g transform="translate(0.3 0.45)"><circle cx="11" cy="11" r="9.1" fill="none" stroke="#b4e1e9" stroke-width="1"/><g transform="translate(6.2 7.55) scale(0.0166)" fill-rule="evenodd"><path d="M572.52 241.4C518.29 135.59 410.93 64 288 64S57.68 135.64 3.48 241.41a32.35 32.35 0 0 0 0 29.19C57.71 376.41 165.07 448 288 448s230.32-71.64 284.52-177.41a32.35 32.35 0 0 0 0-29.19zM288 400a144 144 0 1 1 144-144 143.93 143.93 0 0 1-144 144zm0-240a95.31 95.31 0 0 0-25.31 3.79 47.85 47.85 0 0 1-66.9 66.9A95.78 95.78 0 1 0 288 160z" fill="#55bbcd"/></g></g></svg>
<div class="abs trow" style="left:8.75px;top:119.75px;width:812.5px;height:33.75px;background:#f2f2f2"></div>
<span class="t" style="left:16.2px;top:129.42px;font-size:9.6px;transform:scaleX(1.035);line-height:13px">Medigap</span>
<small class="t sm" style="left:56.3px;top:129.59px;font-size:7.68px;transform:scaleX(1.022);color:#4d4d4d">— extra private insurance, a.k.a. "Medicare Supplement Insurance"</small>
<span class="t" style="left:603.7px;top:130.16px;font-size:9.6px;transform:scaleX(1.014)">$163,336</span>
<span class="t" style="left:739.2px;top:130.16px;font-size:9.6px;transform:scaleX(1.004)">$90,850</span>
<svg class="abs eye" width="23" height="23" viewBox="0 0 23 23" style="left:786px;top:125px"><g transform="translate(0.3 0.82)"><circle cx="11" cy="11" r="9.1" fill="none" stroke="#b4e1e9" stroke-width="1"/><g transform="translate(6.2 7.55) scale(0.0166)" fill-rule="evenodd"><path d="M572.52 241.4C518.29 135.59 410.93 64 288 64S57.68 135.64 3.48 241.41a32.35 32.35 0 0 0 0 29.19C57.71 376.41 165.07 448 288 448s230.32-71.64 284.52-177.41a32.35 32.35 0 0 0 0-29.19zM288 400a144 144 0 1 1 144-144 143.93 143.93 0 0 1-144 144zm0-240a95.31 95.31 0 0 0-25.31 3.79 47.85 47.85 0 0 1-66.9 66.9A95.78 95.78 0 1 0 288 160z" fill="#55bbcd"/></g></g></svg>
<div class="abs trow" style="left:8.75px;top:153.5px;width:812.5px;height:32.75px;background:#fff"></div>
<span class="t" style="left:16.2px;top:162.92px;font-size:9.6px;transform:scaleX(1.020);line-height:13px">Out of Pocket</span>
<small class="t sm" style="left:77.55px;top:164.09px;font-size:7.68px;transform:scaleX(0.971);color:#4d4d4d">— co-pays, Rx, etc.</small>
<span class="t" style="left:603.7px;top:163.66px;font-size:9.6px;transform:scaleX(1.014)">$179,468</span>
<span class="t" style="left:733.7px;top:163.66px;font-size:9.6px;transform:scaleX(1.008)">$106,927</span>
<svg class="abs eye" width="23" height="23" viewBox="0 0 23 23" style="left:786px;top:159px"><g transform="translate(0.3 0.07)"><circle cx="11" cy="11" r="9.1" fill="none" stroke="#b4e1e9" stroke-width="1"/><g transform="translate(6.2 7.55) scale(0.0166)" fill-rule="evenodd"><path d="M572.52 241.4C518.29 135.59 410.93 64 288 64S57.68 135.64 3.48 241.41a32.35 32.35 0 0 0 0 29.19C57.71 376.41 165.07 448 288 448s230.32-71.64 284.52-177.41a32.35 32.35 0 0 0 0-29.19zM288 400a144 144 0 1 1 144-144 143.93 143.93 0 0 1-144 144zm0-240a95.31 95.31 0 0 0-25.31 3.79 47.85 47.85 0 0 1-66.9 66.9A95.78 95.78 0 1 0 288 160z" fill="#55bbcd"/></g></g></svg>
<div class="abs trow off" style="left:8.75px;top:186.25px;width:812.5px;height:32.75px;background:#d9d9d9"></div>
<s class="t" style="left:16.2px;top:196.17px;font-size:9.6px;transform:scaleX(1.034);line-height:13px">Commercial</s>
<s class="t sm" style="left:70.8px;top:197.34px;font-size:7.68px;transform:scaleX(1.028);color:#4d4d4d">— private insurance before claiming Medicare</s>
<div class="abs strike" style="left:16.3px;top:202px;width:215.15px;height:1px;background:rgba(85,85,85,.62)"></div>
<span class="t" style="left:633.9px;top:196.91px;font-size:9.6px;transform:scaleX(0.936);text-decoration:line-through">$0</span>
<span class="t" style="left:763.7px;top:196.91px;font-size:9.6px;transform:scaleX(0.905);text-decoration:line-through">$0</span>
<svg class="abs eye" width="23" height="23" viewBox="0 0 23 23" style="left:786px;top:191px"><g transform="translate(0.3 0.83)"><circle cx="11" cy="11" r="9.1" fill="none" stroke="#a9d6e0" stroke-width="1"/><g transform="translate(6.2 7.55) scale(0.0166)" fill-rule="evenodd"><path d="M572.52 241.4C518.29 135.59 410.93 64 288 64S57.68 135.64 3.48 241.41a32.35 32.35 0 0 0 0 29.19C57.71 376.41 165.07 448 288 448s230.32-71.64 284.52-177.41a32.35 32.35 0 0 0 0-29.19zM288 400a144 144 0 1 1 144-144 143.93 143.93 0 0 1-144 144zm0-240a95.31 95.31 0 0 0-25.31 3.79 47.85 47.85 0 0 1-66.9 66.9A95.78 95.78 0 1 0 288 160z" fill="#5bbccd"/><path d="M470 20 130 500" stroke="#dadada" stroke-width="70" fill="none"/><path d="M330 120 L560 256 L300 420 Z" fill="#dadada" opacity=".55"/></g></g></svg>
</section>
</main>
<div class="abs sb"></div>
</div>
</body>
</html>
